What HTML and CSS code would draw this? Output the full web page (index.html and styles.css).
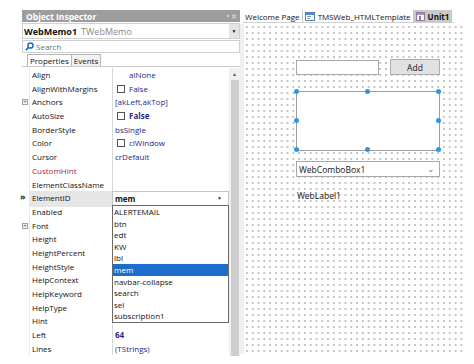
FILE: index.html
```html
<!DOCTYPE html>
<html lang="en">
<head>
  <meta charset="UTF-8">
  <title>Object Inspector</title>
  <link rel="stylesheet" href="styles.css">
</head>
<body>

<div class="screen">
  <section class="inspector">
    <div class="oi-title">
      <span>Object Inspector</span>
      <span class="oi-tools">&#8226; &#10005;</span>
    </div>
    <div class="oi-object">
      <b>WebMemo1</b><span class="type">TWebMemo</span>
      <span class="drop-btn">&#9660;</span>
    </div>
    <div class="oi-search">
      <svg width="9" height="9" viewBox="0 0 9 9">
        <circle cx="5.5" cy="3.5" r="2.6" fill="none" stroke="#1f6fc0" stroke-width="1.5"/>
        <line x1="3.6" y1="5.4" x2="0.8" y2="8.2" stroke="#1f6fc0" stroke-width="1.8"/>
      </svg>
      <span>Search</span>
    </div>
    <div class="oi-tabs">
      <span class="tab active">Properties</span><span class="tab">Events</span>
    </div>

    <div class="oi-body">
      <div class="grid">
        <div class="row"><span class="gutter"></span><span class="name">Align</span><span class="value indent">alNone</span></div>
        <div class="row"><span class="gutter"></span><span class="name">AlignWithMargins</span><span class="value"><i class="check"></i>False</span></div>
        <div class="row"><span class="gutter"><i class="expand">+</i></span><span class="name">Anchors</span><span class="value">[akLeft,akTop]</span></div>
        <div class="row"><span class="gutter"></span><span class="name">AutoSize</span><span class="value"><i class="check"></i><b>False</b></span></div>
        <div class="row"><span class="gutter"></span><span class="name">BorderStyle</span><span class="value">bsSingle</span></div>
        <div class="row"><span class="gutter"></span><span class="name">Color</span><span class="value"><i class="check"></i>clWindow</span></div>
        <div class="row"><span class="gutter"></span><span class="name">Cursor</span><span class="value">crDefault</span></div>
        <div class="row"><span class="gutter"></span><span class="name custom">CustomHint</span><span class="value"></span></div>
        <div class="row"><span class="gutter"></span><span class="name">ElementClassName</span><span class="value"></span></div>
        <div class="row current"><span class="gutter">&raquo;</span><span class="name">ElementID</span><span class="value edit"><b>mem</b><span class="arrow">&#9660;</span></span></div>
        <div class="row"><span class="gutter"></span><span class="name">Enabled</span><span class="value"></span></div>
        <div class="row"><span class="gutter"><i class="expand">+</i></span><span class="name">Font</span><span class="value"></span></div>
        <div class="row"><span class="gutter"></span><span class="name">Height</span><span class="value"></span></div>
        <div class="row"><span class="gutter"></span><span class="name">HeightPercent</span><span class="value"></span></div>
        <div class="row"><span class="gutter"></span><span class="name">HeightStyle</span><span class="value"></span></div>
        <div class="row"><span class="gutter"></span><span class="name">HelpContext</span><span class="value"></span></div>
        <div class="row"><span class="gutter"></span><span class="name">HelpKeyword</span><span class="value"></span></div>
        <div class="row"><span class="gutter"></span><span class="name">HelpType</span><span class="value"></span></div>
        <div class="row"><span class="gutter"></span><span class="name">Hint</span><span class="value"></span></div>
        <div class="row"><span class="gutter"></span><span class="name">Left</span><span class="value"><b>64</b></span></div>
        <div class="row"><span class="gutter"></span><span class="name">Lines</span><span class="value">(TStrings)</span></div>

        <!-- open list for ElementID -->
        <ul class="droplist">
          <li>ALERTEMAIL</li>
          <li>btn</li>
          <li>edt</li>
          <li>KW</li>
          <li>lbl</li>
          <li class="selected">mem</li>
          <li>navbar-collapse</li>
          <li>search</li>
          <li>sel</li>
          <li>subscription1</li>
        </ul>
      </div>
      <div class="scrollbar">
        <span class="up">&#9650;</span>
        <div class="thumb"></div>
      </div>
    </div>
  </section>

  <section class="designer">
    <div class="doc-tabs">
      <span class="doc-tab">Welcome Page</span>
      <span class="doc-tab">
        <svg width="10" height="9" viewBox="0 0 10 9">
          <rect x="0.5" y="0.5" width="9" height="8" fill="#fff" stroke="#5a7fa8"/>
          <rect x="1" y="1" width="8" height="2" fill="#4d8fd6"/>
          <rect x="2" y="4" width="4" height="1" fill="#7a9cc0"/>
          <rect x="2" y="6" width="3" height="1" fill="#7a9cc0"/>
        </svg>
        TMSWeb_HTMLTemplate
      </span>
      <span class="doc-tab active">
        <svg width="9" height="9" viewBox="0 0 9 9">
          <rect x="0.5" y="0.5" width="8" height="8" fill="#f4f4f4" stroke="#8a7f9c"/>
          <rect x="1" y="1" width="7" height="2" fill="#a58fc6"/>
          <rect x="3" y="4" width="2" height="4" fill="#8a7f9c"/>
        </svg>
        <b>Unit1</b>
      </span>
    </div>

    <div class="canvas-wrap">
      <div class="canvas">
        <div class="form-row">
          <div class="web-edit"></div>
          <div class="web-button">Add</div>
        </div>
        <div class="web-memo">
          <i class="handle h-tl"></i><i class="handle h-tc"></i><i class="handle h-tr"></i>
          <i class="handle h-ml"></i><i class="handle h-mr"></i>
          <i class="handle h-bl"></i><i class="handle h-bc"></i><i class="handle h-br"></i>
        </div>
        <div class="web-combo"><span>WebComboBox1</span><span class="chev">&#8964;</span></div>
        <div class="web-label">WebLabel1</div>
      </div>
    </div>
  </section>
</div>

</body>
</html>
```

FILE: styles.css
```css
* {
  box-sizing: border-box;
}

body {
  margin: 0;
  background: #fff;
  font-family: "Open Sans", "Liberation Sans", sans-serif;
  font-size: 8px;
  color: #111;
}

.screen {
  display: flex;
  padding: 10px 0 0 22px;
  height: 364px;
}

/* ---------- object inspector ---------- */

.inspector {
  width: 218px;
  height: 346px;
  display: flex;
  flex-direction: column;
}

.oi-title {
  height: 12px;
  background: #9d9d9d;
  color: #fff;
  font-weight: bold;
  font-size: 8.5px;
  padding: 0 3px 0 4px;
  display: flex;
  align-items: center;
  justify-content: space-between;
}

.oi-tools {
  color: #d8d8d8;
  font-size: 7px;
}

.oi-object {
  height: 16px;
  margin-top: 1px;
  border: 1px solid #d0d0d0;
  display: flex;
  align-items: center;
  padding-left: 1px;
  font-size: 9px;
}

.oi-object .type {
  color: #8a8a8a;
  margin-left: 4px;
}

.drop-btn {
  margin-left: auto;
  width: 10px;
  height: 100%;
  background: #e4e4e4;
  font-size: 5px;
  display: flex;
  align-items: center;
  justify-content: center;
}

.oi-search {
  height: 13px;
  margin-top: 1px;
  border: 1px solid #d0d0d0;
  display: flex;
  align-items: center;
  gap: 2px;
  padding-left: 2px;
  color: #6e6e6e;
}

.oi-tabs {
  height: 13px;
  margin-top: 1px;
  padding-left: 5px;
  border-bottom: 1px solid #c8c8c8;
  display: flex;
  align-items: flex-end;
}

.tab {
  height: 12px;
  line-height: 11px;
  padding: 0 2px;
  border: 1px solid #b8b8b8;
  border-bottom: none;
  background: #f2f2f2;
}

.tab.active {
  background: #fff;
  border-right: none;
}

.oi-body {
  flex: 1;
  display: flex;
  margin-top: 1px;
}

.grid {
  flex: 1;
  position: relative;
}

.row {
  display: grid;
  grid-template-columns: 8px 82px 1fr;
  height: 13.7px;
  line-height: 13.7px;
}

.gutter {
  border-right: 1px solid #f3e9cf;
  font-weight: bold;
  font-size: 9px;
  line-height: 12px;
  margin-left: -2px;
}

.name {
  padding-left: 2px;
  white-space: nowrap;
}

.name.custom {
  color: #a3283c;
}

.value {
  border-left: 1px solid #d8d8d8;
  padding-left: 2px;
  color: #26268c;
  white-space: nowrap;
  display: flex;
  align-items: center;
}

.value.indent {
  padding-left: 16px;
}

.check {
  display: inline-block;
  width: 8px;
  height: 8px;
  border: 1px solid #555;
  margin: 0 4px 0 2px;
  background: #fff;
}

.expand {
  display: inline-flex;
  align-items: center;
  justify-content: center;
  width: 6px;
  height: 6px;
  margin-left: 2px;
  border: 1px solid #a0a0a0;
  background: #f4f4f4;
  font-style: normal;
  font-size: 6px;
  font-weight: normal;
  line-height: 6px;
  color: #555;
}

.row.current .name {
  background: #e6e6e6;
}

.value.edit {
  color: #111;
  border: 1px solid #c4c4c4;
  padding-right: 6px;
}

.value.edit .arrow {
  margin-left: auto;
  font-size: 5px;
  color: #333;
}

.droplist {
  position: absolute;
  left: 90px;
  top: 137px;
  width: 117px;
  margin: 0;
  padding: 0;
  list-style: none;
  background: #fff;
  border: 1px solid #6a6a6a;
}

.droplist li {
  height: 11.6px;
  line-height: 11.6px;
  padding-left: 1px;
}

.droplist li.selected {
  background: #1c6ecc;
  color: #fff;
}

.scrollbar {
  width: 11px;
  background: #f0f0f0;
  display: flex;
  flex-direction: column;
  align-items: center;
}

.scrollbar .up {
  font-size: 5px;
  color: #555;
  height: 12px;
  line-height: 12px;
}

.thumb {
  width: 8px;
  flex: 1;
  background: #cdcdcd;
}

/* ---------- form designer ---------- */

.designer {
  width: 234px;
  display: flex;
  flex-direction: column;
}

.doc-tabs {
  height: 13px;
  margin-left: 3px;
  display: flex;
  align-items: stretch;
  border-bottom: 1px solid #d0d0d0;
  width: 211px;
}

.doc-tab {
  display: flex;
  align-items: center;
  gap: 3px;
  padding: 0 2px;
  border-right: 1px solid #c8c8c8;
  white-space: nowrap;
}

.doc-tab.active {
  background: #c9c9c9;
}

.canvas-wrap {
  margin-top: 1px;
  border-left: 4px solid #efefef;
  height: 330px;
  width: 224px;
}

.canvas {
  height: 100%;
  width: 219px;
  padding: 35px 0 0 52px;
  background-image: radial-gradient(circle, #a9a9a9 0.6px, transparent 0.9px);
  background-size: 5.8px 6px;
  display: flex;
  flex-direction: column;
  align-items: flex-start;
}

.form-row {
  display: flex;
  align-items: center;
  gap: 11px;
}

.web-edit {
  width: 83px;
  height: 15px;
  background: #fff;
  border: 1px solid #a8a8a8;
}

.web-button {
  width: 50px;
  height: 16px;
  background: #e1e1e1;
  border: 1px solid #adadad;
  font-size: 8.5px;
  display: flex;
  align-items: center;
  justify-content: center;
}

.web-memo {
  position: relative;
  margin-top: 16px;
  width: 144px;
  height: 60px;
  background: #fff;
  border: 1px solid #9d9d9d;
}

.handle {
  position: absolute;
  width: 5px;
  height: 5px;
  border-radius: 50%;
  background: #2f97e0;
  margin: -3px 0 0 -3px;
}

.h-tl { left: 0; top: 0; }
.h-tc { left: 50%; top: 0; }
.h-tr { left: 100%; top: 0; }
.h-ml { left: 0; top: 50%; }
.h-mr { left: 100%; top: 50%; }
.h-bl { left: 0; top: 100%; }
.h-bc { left: 50%; top: 100%; }
.h-br { left: 100%; top: 100%; }

.web-combo {
  margin-top: 10px;
  width: 144px;
  height: 16px;
  background: #fff;
  border: 1px solid #a8a8a8;
  display: flex;
  align-items: center;
  justify-content: space-between;
  padding: 0 4px 0 2px;
  font-size: 8.5px;
}

.web-combo .chev {
  color: #777;
  font-size: 9px;
  line-height: 6px;
}

.web-label {
  margin-top: 13px;
  padding-left: 1px;
  font-size: 8.5px;
}
```
